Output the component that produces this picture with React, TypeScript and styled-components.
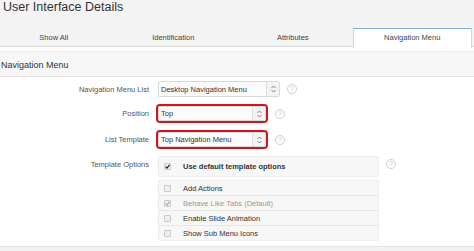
import React from 'react'
import styled, { createGlobalStyle } from 'styled-components'

const GlobalStyle = createGlobalStyle`
  body {
    margin: 0;
    background: #fff;
    font-family: "Liberation Sans", Arial, sans-serif;
    color: #333;
  }
`;

const Page = styled.div`
  width: 474px;
  height: 251px;
  overflow: hidden;
  background: #fff;
`;

const Header = styled.div`
  background: #f3f3f3;
  border-bottom: 1px solid #d8d8d8;
  height: 47px;
  box-sizing: border-box;
`;

const Title = styled.h1`
  margin: 0;
  padding-left: 3px;
  font-size: 12.5px;
  line-height: 15px;
  font-weight: normal;
  color: #333;
`;

const Tabs = styled.div`
  display: flex;
  margin: 13px 0 0 -6px;
  height: 19px;
`;

const Tab = styled.div<{ $active?: boolean }>`
  flex: none;
  width: 119.5px;
  box-sizing: border-box;
  text-align: center;
  font-size: 7.5px;
  line-height: 18px;
  color: #444;
  border-top: 1px solid ${p => (p.$active ? '#7eaedc' : 'transparent')};
  border-left: 1px solid ${p => (p.$active ? '#d6d6d6' : 'transparent')};
  border-right: 1px solid ${p => (p.$active ? '#d6d6d6' : 'transparent')};
  background: ${p => (p.$active ? '#fff' : 'transparent')};
  height: ${p => (p.$active ? '20px' : '19px')};
`;

const Spacer = styled.div`
  height: 4px;
`;

const SectionHead = styled.div`
  background: #f7f7f7;
  border-top: 1px solid #ececec;
  border-bottom: 1px solid #e2e2e2;
  height: 26px;
  box-sizing: border-box;
  padding: 3px 0 0 1px;
  font-size: 9px;
  line-height: 21px;
  color: #333;
`;

const Form = styled.div`
  display: grid;
  grid-template-columns: 149px auto;
  column-gap: 9px;
  row-gap: 7px;
  padding: 4px 0 5px;
`;

const Label = styled.div<{ $top?: boolean }>`
  text-align: right;
  font-size: 7.5px;
  line-height: 9px;
  color: #555;
  align-self: ${p => (p.$top ? 'start' : 'center')};
  padding-top: ${p => (p.$top ? '4px' : '0')};
`;

const Control = styled.div`
  display: flex;
  align-items: center;
  gap: 7px;
`;

const ControlTop = styled(Control)`
  align-items: flex-start;
`;

const RedFrame = styled.div`
  border: 2px solid #d0141f;
  border-radius: 4px;
  margin-left: -2px;
  display: flex;
`;

const Select = styled.div<{ $width: number; $height: number }>`
  display: flex;
  width: ${p => p.$width}px;
  height: ${p => p.$height}px;
  box-sizing: border-box;
  border: 1px solid #d9d9d9;
  border-radius: 2px;
  background: #fbfbfb;
`;

const SelectValue = styled.div`
  flex: 1;
  display: flex;
  align-items: center;
  padding-left: 2px;
  font-size: 7.5px;
  color: #333;
  white-space: nowrap;
  overflow: hidden;
`;

const Stepper = styled.div`
  width: 12px;
  border-left: 1px solid #dedede;
  background: #f3f3f3;
  display: flex;
  align-items: center;
  justify-content: center;
`;

const Help = styled.div<{ $offset?: number }>`
  width: 10px;
  height: 10px;
  box-sizing: border-box;
  border: 1px solid #cfcfcf;
  border-radius: 50%;
  font-size: 6.5px;
  line-height: 8px;
  text-align: center;
  color: #c4c4c4;
  margin-top: ${p => p.$offset ?? 0}px;
`;

const Group = styled.div`
  width: 221px;
  display: flex;
  flex-direction: column;
  gap: 3px;
`;

const Box = styled.div`
  background: #f7f7f7;
  border: 1px solid #ededed;
  border-radius: 2px;
`;

const Option = styled.div<{ $bold?: boolean; $muted?: boolean; $tall?: boolean }>`
  display: flex;
  align-items: center;
  height: ${p => (p.$tall ? '19px' : '14px')};
  padding-left: 5px;
  font-size: 7.5px;
  font-weight: ${p => (p.$bold ? 'bold' : 'normal')};
  color: ${p => (p.$muted ? '#9a9a9a' : '#333')};
  & + & {
    border-top: 1px solid #e6e6e6;
  }
`;

const Check = styled.span`
  width: 7px;
  height: 7px;
  box-sizing: border-box;
  border: 1px solid #cacaca;
  border-radius: 1px;
  background: #eee;
  margin-right: 12px;
  display: flex;
  align-items: center;
  justify-content: center;
`;

const Footer = styled.div`
  background: #f1f1f1;
  border-top: 1px solid #e4e4e4;
  height: 20px;
`;

const Chevrons = () => (
  <svg width="7" height="10" viewBox="0 0 7 10">
    <path d="M1.5 4 L3.5 2 L5.5 4 M1.5 6 L3.5 8 L5.5 6" fill="none" stroke="#777" strokeWidth="0.9" />
  </svg>
);

const Tick = ({ color }: { color: string }) => (
  <svg width="5" height="5" viewBox="0 0 5 5">
    <path d="M0.6 2.6 L2 4 L4.5 0.8" fill="none" stroke={color} strokeWidth="1.2" />
  </svg>
);

const SelectBox = ({ value, width, height = 16 }: { value: string; width: number; height?: number }) => (
  <Select $width={width} $height={height}>
    <SelectValue>{value}</SelectValue>
    <Stepper>
      <Chevrons />
    </Stepper>
  </Select>
);

const options = [
  { text: 'Add Actions', checked: false, muted: false },
  { text: 'Behave Like Tabs (Default)', checked: true, muted: true },
  { text: 'Enable Slide Animation', checked: false, muted: false },
  { text: 'Show Sub Menu Icons', checked: false, muted: false },
];

const tabs = ['Show All', 'Identification', 'Attributes', 'Navigation Menu'];

export default function App() {
  return (
    <Page>
      <GlobalStyle />
      <Header>
        <Title>User Interface Details</Title>
        <Tabs>
          {tabs.map((t, i) => (
            <Tab key={t} $active={i === 3}>{t}</Tab>
          ))}
        </Tabs>
      </Header>
      <Spacer />
      <SectionHead>Navigation Menu</SectionHead>
      <Form>
        <Label>Navigation Menu List</Label>
        <Control>
          <SelectBox value="Desktop Navigation Menu" width={122} />
          <Help>?</Help>
        </Control>

        <Label>Position</Label>
        <Control>
          <RedFrame>
            <SelectBox value="Top" width={108} height={15} />
          </RedFrame>
          <Help>?</Help>
        </Control>

        <Label>List Template</Label>
        <Control>
          <RedFrame>
            <SelectBox value="Top Navigation Menu" width={108} height={15} />
          </RedFrame>
          <Help>?</Help>
        </Control>

        <Label $top>Template Options</Label>
        <ControlTop>
          <Group>
            <Box>
              <Option $bold $tall>
                <Check><Tick color="#222" /></Check>
                Use default template options
              </Option>
            </Box>
            <Box>
              {options.map(o => (
                <Option key={o.text} $muted={o.muted}>
                  <Check>{o.checked && <Tick color="#aaa" />}</Check>
                  {o.text}
                </Option>
              ))}
            </Box>
          </Group>
          <Help $offset={3}>?</Help>
        </ControlTop>
      </Form>
      <Footer />
    </Page>
  );
}
